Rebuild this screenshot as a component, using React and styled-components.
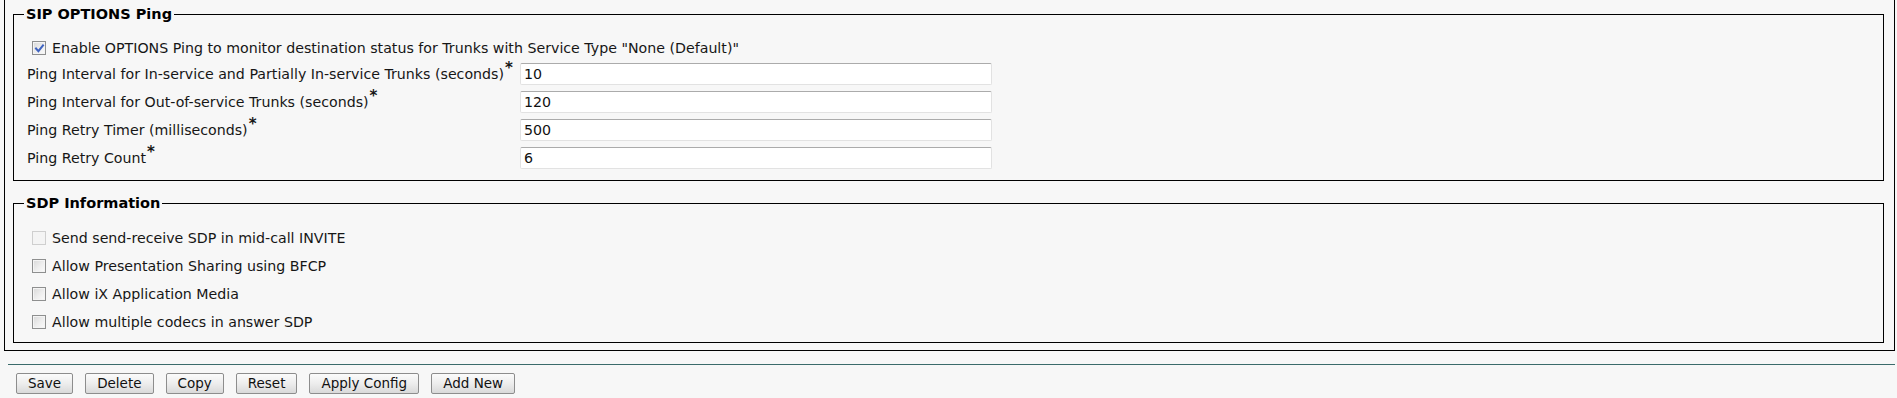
import React from "react";
import styled, { createGlobalStyle } from "styled-components";

const GlobalStyle = createGlobalStyle`
  html, body {
    margin: 0;
    padding: 0;
    background: #f7f7f7;
  }
  body {
    font-family: "DejaVu Sans", Verdana, sans-serif;
    font-size: 14.2px;
    color: #161616;
  }
`;

const Page = styled.div`
  padding: 0 2px 0 4px;
`;

const OuterBox = styled.div`
  border: 1px solid #000;
  border-top: 0;
  padding: 6px 10px 7px 8px;
`;

const Fieldset = styled.fieldset`
  margin: ${(p) => (p.$first ? "0" : "14px 0 0 0")};
  padding: 0 0 ${(p) => p.$pb}px 0;
  border: 1px solid #000;
  min-width: 0;
`;

const Legend = styled.legend`
  margin-left: 10px;
  padding: 0 2px;
  font-weight: bold;
  font-size: 14.5px;
  line-height: 16px;
  color: #000;
`;

const Rows = styled.div`
  display: flex;
  flex-direction: column;
  gap: ${(p) => p.$gap}px;
  padding: ${(p) => p.$pt}px 0 0 13px;
`;

const CheckRow = styled.label`
  display: flex;
  align-items: center;
  height: 22px;
  gap: 6px;
  padding-left: 5px;
  line-height: 16px;
  white-space: nowrap;
`;

const Box = styled.span`
  box-sizing: border-box;
  width: 14px;
  height: 14px;
  flex: none;
  border: 1px solid ${(p) => (p.$disabled ? "#cfcfcf" : "#8e8f8f")};
  background: ${(p) =>
    p.$disabled
      ? "#f4f4f4"
      : "linear-gradient(135deg, #d8d8d8 0%, #eeeeee 55%, #fbfbfb 100%)"};
  box-shadow: ${(p) => (p.$disabled ? "none" : "inset 0 0 0 1px #f4f4f4")};
  display: flex;
  align-items: center;
  justify-content: center;
`;

const FieldGrid = styled.div`
  display: grid;
  grid-template-columns: 493px 472px;
  row-gap: 6px;
`;

const Label = styled.div`
  padding-top: 3px;
  line-height: 16px;
  white-space: nowrap;
`;

const Req = styled.span`
  font-size: 15px;
  font-weight: bold;
  vertical-align: super;
  line-height: 0;
  margin-left: 1px;
`;

const TextInput = styled.input`
  box-sizing: border-box;
  width: 472px;
  height: 22px;
  margin: 0;
  padding: 0 3px;
  border: 1px solid #e2e2e2;
  border-top-color: #ababab;
  border-radius: 2px;
  background: #fff;
  font-family: "DejaVu Sans", Verdana, sans-serif;
  font-size: 14.2px;
  color: #111;
  outline: none;
`;

const Divider = styled.div`
  margin: 13px 0 0 4px;
  border-top: 1px solid #3b6b6b;
`;

const ButtonBar = styled.div`
  display: flex;
  gap: 12px;
  padding: 8px 0 0 12px;
`;

const Button = styled.button`
  box-sizing: border-box;
  height: 21px;
  margin: 0;
  padding: 0 11px;
  border: 1px solid #8d8d8d;
  border-radius: 2px;
  background: linear-gradient(#fbfbfb 0%, #ededed 50%, #d9d9d9 100%);
  font-family: "DejaVu Sans", Verdana, sans-serif;
  font-size: 13.5px;
  line-height: 19px;
  color: #111;
  cursor: pointer;
`;

const Check = () => (
  <svg width="11" height="11" viewBox="0 0 11 11">
    <path
      d="M2 5.5 L4.4 8.2 L9 2.3"
      fill="none"
      stroke="#3f63c0"
      strokeWidth="2"
      strokeLinecap="square"
    />
  </svg>
);

const Checkbox = ({ checked, disabled, children }) => (
  <CheckRow>
    <Box $disabled={disabled}>{checked && <Check />}</Box>
    <span>{children}</span>
  </CheckRow>
);

const fields = [
  ["Ping Interval for In-service and Partially In-service Trunks (seconds)", "10"],
  ["Ping Interval for Out-of-service Trunks (seconds)", "120"],
  ["Ping Retry Timer (milliseconds)", "500"],
  ["Ping Retry Count", "6"],
];

const sdp = [
  ["Send send-receive SDP in mid-call INVITE", true],
  ["Allow Presentation Sharing using BFCP", false],
  ["Allow iX Application Media", false],
  ["Allow multiple codecs in answer SDP", false],
];

const buttons = ["Save", "Delete", "Copy", "Reset", "Apply Config", "Add New"];

export default function App() {
  return (
    <Page>
      <GlobalStyle />
      <OuterBox>
        <Fieldset $first $pb={11}>
          <Legend>SIP OPTIONS Ping</Legend>
          <Rows $gap={4} $pt={15}>
            <Checkbox checked>
              Enable OPTIONS Ping to monitor destination status for Trunks with Service Type "None (Default)"
            </Checkbox>
            <FieldGrid>
              {fields.map(([label, value]) => (
                <React.Fragment key={label}>
                  <Label>
                    {label}
                    <Req>*</Req>
                  </Label>
                  <TextInput defaultValue={value} />
                </React.Fragment>
              ))}
            </FieldGrid>
          </Rows>
        </Fieldset>
        <Fieldset $pb={9}>
          <Legend>SDP Information</Legend>
          <Rows $gap={6} $pt={16}>
            {sdp.map(([label, disabled]) => (
              <Checkbox key={label} disabled={disabled}>
                {label}
              </Checkbox>
            ))}
          </Rows>
        </Fieldset>
      </OuterBox>
      <Divider />
      <ButtonBar>
        {buttons.map((b) => (
          <Button key={b}>{b}</Button>
        ))}
      </ButtonBar>
    </Page>
  );
}
